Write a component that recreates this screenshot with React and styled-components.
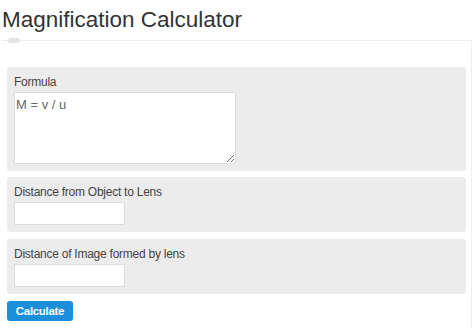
import React from 'react';
import styled, { createGlobalStyle } from 'styled-components';

const GlobalStyle = createGlobalStyle`
  html, body {
    margin: 0;
    padding: 0;
    background: #ffffff;
    font-family: "Liberation Sans", Arial, sans-serif;
  }
`;

const Page = styled.div`
  padding: 0 2px;
  width: 470px;
`;

const Title = styled.h1`
  margin: 0;
  padding-top: 7px;
  height: 33px;
  font-size: 22.5px;
  line-height: 25px;
  font-weight: normal;
  color: #333333;
`;

const Card = styled.div`
  position: relative;
  border-top: 1px solid #eeeeee;
  border-right: 1px solid #eeeeee;
  padding: 26px 5px 8px 5px;
  min-height: 260px;
`;

const Tab = styled.span`
  position: absolute;
  top: -3px;
  left: 6px;
  width: 12px;
  height: 5px;
  border-radius: 3px;
  background: #e4e4e4;
`;

const Panel = styled.div`
  background: #ececec;
  border-radius: 3px;
  padding: 7px 7px;
  margin-bottom: ${props => props.gap || 6}px;
  width: 445px;
`;

const Label = styled.label`
  display: block;
  font-size: 12px;
  letter-spacing: -0.25px;
  line-height: 17px;
  color: #444444;
  margin-bottom: 1px;
`;

const FormulaBox = styled.textarea`
  display: block;
  box-sizing: border-box;
  width: 222px;
  height: 72px;
  margin: 0;
  padding: 4px 1px;
  border: 1px solid #dddddd;
  background: #ffffff;
  font-family: "Liberation Sans", Arial, sans-serif;
  font-size: 13px;
  color: #666666;
`;

const NumberInput = styled.input`
  display: block;
  box-sizing: border-box;
  width: 111px;
  height: 23px;
  margin: 0;
  padding: 2px 4px;
  border: 1px solid #dddddd;
  background: #ffffff;
  font-family: "Liberation Sans", Arial, sans-serif;
  font-size: 13px;
`;

const Button = styled.button`
  display: block;
  margin-top: 1px;
  width: 66px;
  height: 20px;
  padding: 0;
  border: none;
  border-radius: 3px;
  background: #1b8fd9;
  color: #ffffff;
  font-family: "Liberation Sans", Arial, sans-serif;
  font-size: 11.5px;
  font-weight: bold;
  letter-spacing: -0.3px;
`;

export default function App() {
  return (
    <>
      <GlobalStyle />
      <Page>
        <Title>Magnification Calculator</Title>
        <Card>
          <Tab />
          <Panel gap={6}>
            <Label>Formula</Label>
            <FormulaBox defaultValue="M = v / u" />
          </Panel>
          <Panel gap={7}>
            <Label>Distance from Object to Lens</Label>
            <NumberInput type="text" />
          </Panel>
          <Panel gap={7}>
            <Label>Distance of Image formed by lens</Label>
            <NumberInput type="text" />
          </Panel>
          <Button>Calculate</Button>
        </Card>
      </Page>
    </>
  );
}
